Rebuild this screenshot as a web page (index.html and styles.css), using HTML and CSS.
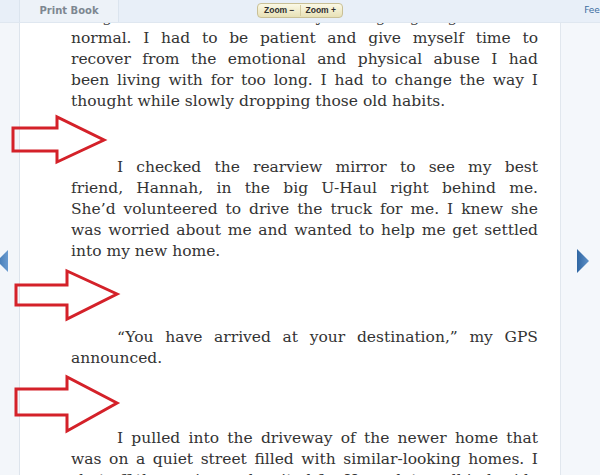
FILE: index.html
```html
<!DOCTYPE html>
<html>
<head>
<meta charset="utf-8">
<link rel="stylesheet" href="styles.css">
</head>
<body>
<div class="viewer">
  <div class="toolbar">
    <div class="tb-left">
      <div class="tb-gap"></div>
      <div class="tab">Print Book</div>
    </div>
    <div class="zoom">
      <span class="zbtn">Zoom &minus;</span>
      <span class="zsep"></span>
      <span class="zbtn">Zoom +</span>
    </div>
    <div class="tb-right"><span class="feed">Feedback</span></div>
  </div>
  <div class="main">
    <div class="gutter gutter-left">
      <svg class="nav" width="8" height="24" viewBox="0 0 8 24"><defs><linearGradient id="gl" x1="0" y1="0" x2="1" y2="0"><stop offset="0" stop-color="#3f77b3"/><stop offset="1" stop-color="#6a9bd0"/></linearGradient></defs><polygon points="-3,12 8,1 8,23" fill="url(#gl)"/></svg>
    </div>
    <div class="page">
      <div class="text">
        <p class="para">
          <span class="ln">things would ever feel like they were going to get back to</span>
        </p>
        <p class="para p1">
          <span class="ln">normal. I had to be patient and give myself time to</span>
          <span class="ln">recover from the emotional and physical abuse I had</span>
          <span class="ln">been living with for too long. I had to change the way I</span>
          <span class="ln last">thought while slowly dropping those old habits.</span>
        </p>
        <p class="para p2">
          <span class="ln indent">I checked the rearview mirror to see my best</span>
          <span class="ln">friend, Hannah, in the big U-Haul right behind me.</span>
          <span class="ln">She’d volunteered to drive the truck for me. I knew she</span>
          <span class="ln">was worried about me and wanted to help me get settled</span>
          <span class="ln last">into my new home.</span>
        </p>
        <p class="para p3">
          <span class="ln indent">“You have arrived at your destination,” my GPS</span>
          <span class="ln last">announced.</span>
        </p>
        <p class="para p4">
          <span class="ln indent">I pulled into the driveway of the newer home that</span>
          <span class="ln">was on a quiet street filled with similar-looking homes. I</span>
          <span class="ln">shut off the engine and waited for Hannah to pull in beside</span>
        </p>
      </div>
    </div>
    <div class="gutter gutter-right">
      <svg class="nav" width="14" height="26" viewBox="0 0 14 26"><defs><linearGradient id="gr" x1="0" y1="0" x2="1" y2="0"><stop offset="0" stop-color="#2f66a3"/><stop offset="1" stop-color="#5f92c8"/></linearGradient></defs><polygon points="1,1 13,13 1,25" fill="url(#gr)"/></svg>
    </div>
  </div>
</div>
<svg class="marks" width="600" height="475" viewBox="0 0 600 475">
  <g fill="none" stroke="#d42129" stroke-width="3" stroke-linejoin="miter">
    <polygon points="13,128 57,128 57,117 104,140 57,162 57,151 13,151"/>
    <polygon points="16,285 67,285 67,271 117,294 67,319 67,305 16,305"/>
    <polygon points="16,389 67,389 67,377 117,403 67,431 67,415 16,415"/>
  </g>
</svg>
</body>
</html>
```
FILE: styles.css
```css
html, body {
  margin: 0;
  padding: 0;
}
body {
  width: 600px;
  height: 475px;
  overflow: hidden;
  position: relative;
  background: #fff;
}
.viewer {
  display: flex;
  flex-direction: column;
  height: 475px;
}
.toolbar {
  height: 23px;
  flex: none;
  display: grid;
  grid-template-columns: 1fr auto 1fr;
  align-items: stretch;
  background: #e8eff8;
  border-bottom: 1px solid #dfe7f0;
  box-sizing: border-box;
  font-family: "DejaVu Sans", Verdana, sans-serif;
}
.tb-left {
  display: flex;
}
.tb-gap {
  width: 19px;
  border-right: 1px solid #dbe4ee;
}
.tab {
  width: 99px;
  border-right: 1px solid #dbe4ee;
  background: #edf2f8;
  color: #7d8791;
  font-weight: bold;
  font-size: 10px;
  display: flex;
  align-items: center;
  justify-content: center;
  padding-bottom: 1px;
  box-sizing: border-box;
}
.zoom {
  align-self: start;
  margin-top: 3px;
  height: 15px;
  display: flex;
  align-items: center;
  border: 1px solid #c9c096;
  border-radius: 4px;
  background: linear-gradient(#fbf9e6, #e8e1b6);
  box-sizing: border-box;
  padding: 0 4px;
  font-family: "Liberation Sans", Arial, sans-serif;
  font-size: 8.5px;
  font-weight: bold;
  color: #2e2e2e;
}
.zbtn {
  padding: 0 2px;
  line-height: 13px;
  white-space: nowrap;
}
.zsep {
  width: 1px;
  height: 11px;
  background: #d4cba0;
  margin: 0 3px;
}
.tb-right {
  display: flex;
  justify-content: flex-end;
  overflow: hidden;
}
.feed {
  margin-top: 5px;
  margin-right: -27px;
  font-size: 9px;
  color: #3c6d9f;
  white-space: nowrap;
}
.main {
  flex: 1;
  display: flex;
  min-height: 0;
}
.gutter {
  display: flex;
  flex-direction: column;
  justify-content: center;
  padding-top: 24px;
  box-sizing: border-box;
}
.gutter-left {
  width: 20px;
  background: #f3f6fa;
  border-right: 1px solid #dde4ec;
  box-sizing: border-box;
  align-items: flex-start;
}
.gutter-right {
  width: 40px;
  background: #f4f7fb;
  border-left: 1px solid #e1e7ee;
  box-sizing: border-box;
  align-items: flex-start;
  padding-left: 15px;
}
.nav {
  display: block;
}
.page {
  flex: 1;
  overflow: hidden;
  background: #fff;
}
.text {
  margin-top: -16px;
  padding-left: 51px;
  padding-right: 22px;
  font-family: "DejaVu Serif", Georgia, serif;
  font-size: 15.5px;
  line-height: 21px;
  color: #333;
}
.para {
  margin: 0;
}
.p1 {
  margin-top: 0;
}
.p2 {
  margin-top: 45px;
}
.p3 {
  margin-top: 65px;
}
.p4 {
  margin-top: 59px;
}
.ln {
  display: block;
  text-align: justify;
  text-align-last: justify;
  white-space: nowrap;
}
.ln.last {
  text-align-last: left;
}
.indent {
  padding-left: 46px;
}
.marks {
  position: absolute;
  left: 0;
  top: 0;
  pointer-events: none;
}
```
